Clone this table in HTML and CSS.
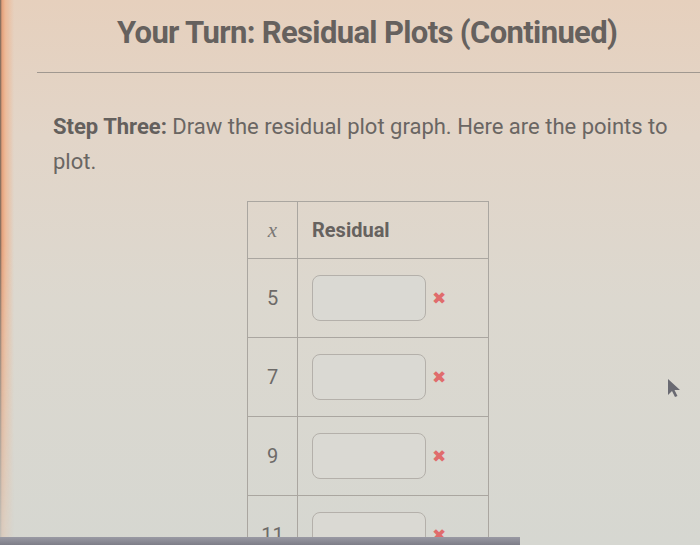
FILE: index.html
```html
<!DOCTYPE html>
<html>
<head>
<meta charset="utf-8">
<link rel="stylesheet" href="styles.css">
</head>
<body>
<div class="screen">
  <div class="edge"></div>
  <div class="page">
    <h1 class="title">Your Turn: Residual Plots (Continued)</h1>
    <hr class="rule">
    <p class="step"><b>Step Three:</b> Draw the residual plot graph. Here are the points to plot.</p>
    <table class="grid">
      <tr class="head">
        <th class="xcol"><i class="var">x</i></th>
        <th class="rcol">Residual</th>
      </tr>
      <tr>
        <td class="xcol">5</td>
        <td class="rcol"><div class="cell"><span class="box"></span><span class="mark">✖</span></div></td>
      </tr>
      <tr>
        <td class="xcol">7</td>
        <td class="rcol"><div class="cell"><span class="box"></span><span class="mark">✖</span></div></td>
      </tr>
      <tr>
        <td class="xcol">9</td>
        <td class="rcol"><div class="cell"><span class="box"></span><span class="mark">✖</span></div></td>
      </tr>
      <tr>
        <td class="xcol">11</td>
        <td class="rcol"><div class="cell"><span class="box"></span><span class="mark">✖</span></div></td>
      </tr>
    </table>
  </div>
  <svg class="cursor" width="20" height="22" viewBox="0 0 20 22"><path d="M3 2 L3 18 L7 14 L10 20 L12.5 19 L9.5 13 L15 13 Z" fill="#6a6a72"/></svg>
  <div class="bezel"></div>
</div>
</body>
</html>
```
FILE: styles.css
```css
html, body {
  margin: 0;
  padding: 0;
  width: 700px;
  height: 545px;
  overflow: hidden;
}
.screen {
  position: relative;
  width: 700px;
  height: 545px;
  overflow: hidden;
  background: linear-gradient(180deg, #e6d0bd 0%, #e2d5c8 25%, #dcd8cf 55%, #d6d7d1 100%);
  font-family: Roboto, "Liberation Sans", sans-serif;
  color: #676361;
}
.edge {
  position: absolute;
  left: 0;
  top: 0;
  width: 14px;
  height: 545px;
  background: linear-gradient(90deg, #6e6258 0px, #e5a07a 2px, #ecb896 5px, rgba(230,200,180,0) 14px);
  -webkit-mask-image: linear-gradient(180deg, #000 0%, #000 45%, rgba(0,0,0,0.2) 100%);
}
.page {
  padding: 14px 0 0 37px;
}
.title {
  margin: 0;
  padding-left: 80px;
  font-size: 31px;
  font-weight: 700;
  line-height: 38px;
  letter-spacing: -0.65px;
  color: #66615e;
}
.rule {
  margin: 20px 0 0 0;
  border: 0;
  border-top: 1.5px solid #a09890;
  height: 0;
}
.step {
  margin: 36px 0 0 16px;
  width: 625px;
  font-size: 22px;
  line-height: 35px;
  letter-spacing: 0;
  color: #6a6663;
}
.step b {
  font-weight: 700;
  color: #64605d;
}
.grid {
  margin: 22px 0 0 210px;
  border-collapse: collapse;
  border: 1.5px solid #aaa6a0;
}
.grid th, .grid td {
  border: 1.5px solid #aaa6a0;
  padding: 0;
}
.head th {
  height: 56px;
  text-align: left;
  font-size: 20px;
  font-weight: 700;
  color: #66625f;
}
.xcol {
  width: 49px;
  text-align: center;
  font-size: 20px;
  color: #6d6a68;
}
.head .xcol {
  text-align: center;
}
.var {
  font-family: "Liberation Serif", "DejaVu Serif", serif;
  font-style: italic;
  font-weight: 400;
  font-size: 21px;
  color: #7a7775;
}
.rcol {
  width: 176px;
  padding-left: 14px !important;
  height: 78px;
}
.head .rcol {
  height: 56px;
}
.cell {
  display: flex;
  align-items: center;
  gap: 6px;
}
.box {
  display: block;
  width: 112px;
  height: 44px;
  border: 1.5px solid #b4b0aa;
  border-radius: 8px;
  background: #dad9d3;
}
.mark {
  color: #e06c6c;
  font-size: 17px;
  line-height: 1;
  font-family: "DejaVu Sans", sans-serif;
}
.cursor {
  position: absolute;
  left: 665px;
  top: 377px;
}
.bezel {
  position: absolute;
  left: 0;
  bottom: 0;
  width: 520px;
  height: 8px;
  background: linear-gradient(180deg, #9a9aa4, #7e7e88);
}
```
